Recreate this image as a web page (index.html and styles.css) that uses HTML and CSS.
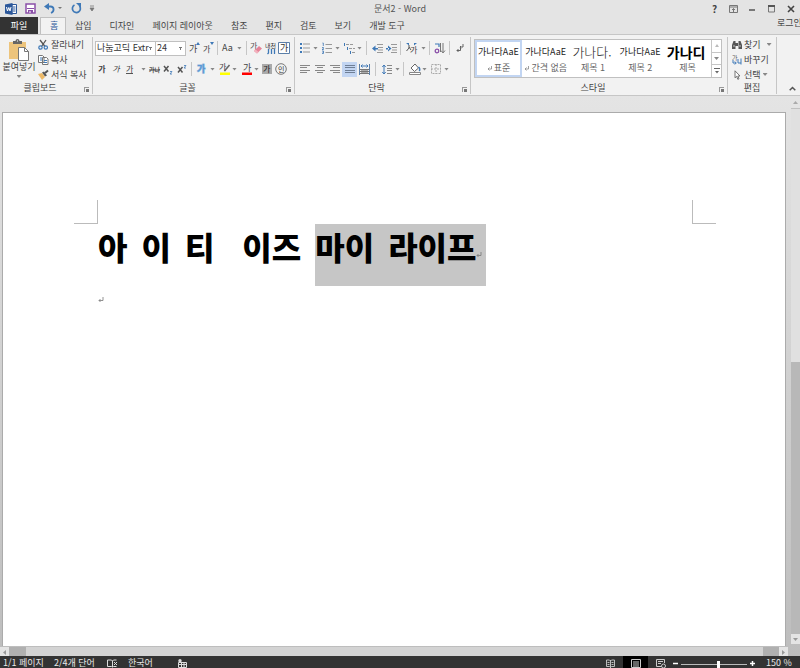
FILE: index.html
```html
<!DOCTYPE html>
<html lang="ko">

<head>
  <meta charset="UTF-8" />
  <meta name="viewport" content="width=device-width, initial-scale=1.0" />
  <title>문서2 - Word</title>
  <link rel="stylesheet" href="styles.css">
</head>

<body>
  <header class="titlebar">
    <div class="quick">
      <svg width="12" height="12" viewBox="0 0 12 12"><path d="M7 1.500h4.500v9H7z" fill="#fff" stroke="#2b579a"/><path d="M8 4h2.500M8 6h2.500M8 8h2.500" stroke="#2b579a"/><path d="M0 1.500 7.500 0v12L0 10.500z" fill="#2b579a"/><path d="m1.500 4 1 4L3.800 4.500 5 8l1-4" fill="none" stroke="#fff"/></svg>
      <button class="qb" aria-label="저장"><svg width="11" height="11" viewBox="0 0 11 11"><path d="M1 1h9v9H1z" fill="#fff" stroke="#8a4fa8" stroke-width="1.500"/><path d="M2 5.500h7" stroke="#8a4fa8"/><path d="M3 7h5v3H3z" fill="#8a4fa8"/><path d="M4.500 8h1v2h-1z" fill="#fff"/></svg></button>
      <button class="qb" aria-label="실행 취소"><svg width="19" height="11" viewBox="0 0 19 11"><path d="M5 0v7L0 3.500z" fill="#3f79b7"/><path d="M3 3.500h3.500c4 0 4 5 .5 6.500" fill="none" stroke="#3f79b7" stroke-width="1.800"/><path d="M14 4h4l-2 2z" fill="#777"/></svg></button>
      <button class="qb" aria-label="다시 실행"><svg width="11" height="11" viewBox="0 0 11 11"><path d="M3.500 2A4 4 0 1 0 8.500 3" fill="none" stroke="#3f79b7" stroke-width="1.700"/><path d="M5 0h5v5z" fill="#3f79b7"/></svg></button>
      <button class="qb" aria-label="사용자 지정"><svg width="5" height="7" viewBox="0 0 5 7"><path d="M0 1h4M0 3h4l-2 3z" stroke="#777" fill="#777" stroke-width=".8"/></svg></button>
    </div>
    <h1 class="doc-title">문서2 - Word</h1>
    <div class="window-buttons">
      <button class="wb" aria-label="도움말"><b>?</b></button>
      <button class="wb" aria-label="리본 표시"><svg width="9" height="8" viewBox="0 0 9 8"><path d="M.5.500h8v7h-8zM.5 2h8M4.500 7V3.500M3 5l1.500-1.500L6 5" fill="none" stroke="#777"/></svg></button>
      <button class="wb" aria-label="최소화"><svg width="7" height="8" viewBox="0 0 7 8"><path d="M0 5h6" stroke="#555" stroke-width="1.500"/></svg></button>
      <button class="wb" aria-label="최대화"><svg width="8" height="8" viewBox="0 0 8 8"><path d="M.5 1v6h6V1" fill="none" stroke="#777"/><path d="M0 1h7" stroke="#555" stroke-width="2"/></svg></button>
      <button class="wb" aria-label="닫기"><svg width="8" height="8" viewBox="0 0 8 8"><path d="m1 1 6 6M7 1 1 7" stroke="#444" stroke-width="1.600"/></svg></button>
    </div>
  </header>

  <nav class="tabs">
    <button class="tab file">파일</button>
    <button class="tab active">홈</button>
    <button class="tab">삽입</button>
    <button class="tab">디자인</button>
    <button class="tab">페이지 레이아웃</button>
    <button class="tab">참조</button>
    <button class="tab">편지</button>
    <button class="tab">검토</button>
    <button class="tab">보기</button>
    <button class="tab">개발 도구</button>
    <a class="login" href="#">로그인</a>
  </nav>

  <section class="ribbon">
    <div class="group clipboard">
      <div class="group-body">
        <button class="paste">
          <svg width="20" height="22" viewBox="0 0 20 22"><path d="M0 3h17v17H0z" fill="#edc47c"/><path d="M4 5V2h2.500a2 2 0 0 1 4 0H13v3z" fill="#666"/><path d="M8 1.500h1v1H8z" fill="#fff"/><path d="M9.500 8.500h6l4 4v9h-10z" fill="#fff" stroke="#777"/><path d="M15.500 8.500v4h4" fill="none" stroke="#777"/></svg>
          <span>붙여넣기</span>
          <i class="arr"></i>
        </button>
        <div class="stack">
          <button class="line-btn"><svg width="11" height="10" viewBox="0 0 11 10"><path d="m2 0 5 6.500M8 0 3.500 6.500" stroke="#555" stroke-width="1.300"/><circle cx="2.500" cy="7.500" r="1.700" fill="none" stroke="#3f79b7" stroke-width="1.200"/><circle cx="7.800" cy="7.500" r="1.700" fill="none" stroke="#3f79b7" stroke-width="1.200"/></svg>잘라내기</button>
          <button class="line-btn"><svg width="11" height="10" viewBox="0 0 11 10"><path d="M.5.500h4l1.500 1.500v5.500H.5zM4.500 2.500h4L10 4v5.500H4.500z" fill="#fff" stroke="#777"/><path d="M2 3h2M2 5h2M6 5.500h3M6 7.500h3" stroke="#3f79b7"/></svg>복사</button>
          <button class="line-btn"><svg width="11" height="10" viewBox="0 0 11 10"><path d="m0 4 4-1 3 4-3 3z" fill="#edb967"/><path d="m4 2.500 2-1 3 4-2 1z" fill="#555"/><path d="m7 3 3-2.500" stroke="#555" stroke-width="2"/></svg>서식 복사</button>
        </div>
      </div>
      <div class="group-label">클립보드<i class="launcher"></i></div>
    </div>

    <div class="group font">
      <div class="group-body rows">
        <div class="row">
          <select class="combo combo-font" aria-label="글꼴"><option>나눔고딕 Extr</option></select>
          <select class="combo combo-size" aria-label="글꼴 크기"><option>24</option></select>
          <button class="ib" aria-label="글꼴 크게"><svg width="12" height="12" viewBox="0 0 12 12"><text x="1" y="10" font-size="9" fill="#444">가</text><path d="M8 3h4L10 0z" fill="#3f79b7"/></svg></button>
          <button class="ib" aria-label="글꼴 작게"><svg width="12" height="12" viewBox="0 0 12 12"><text x="1" y="10" font-size="8" fill="#444">가</text><path d="M8 0h4l-2 3z" fill="#3f79b7"/></svg></button>
          <i class="sep"></i>
          <button class="ib aa">Aa<i class="arr"></i></button>
          <i class="sep"></i>
          <button class="ib" aria-label="서식 지우기"><svg width="13" height="13" viewBox="0 0 13 13"><text x="0" y="7" font-size="8" fill="#555">가</text><path d="m4 9 5-5 3 2.500-5 5z" fill="#e58397"/><path d="m4 9 1.500-1.500 3 2.500L7 11.500z" fill="#f3b3bf"/></svg></button>
          <button class="ib" aria-label="윗주 달기"><svg width="13" height="13" viewBox="0 0 13 13"><text x="1" y="6" font-size="6" fill="#333">내천</text><path d="M4.500 7v4l-1 1M7.500 7v5M10.500 7v5" fill="none" stroke="#3f79b7" stroke-width="1.300"/></svg></button>
          <button class="ib" aria-label="문자 테두리"><svg width="12" height="12" viewBox="0 0 12 12"><path d="M.5.500h11v11H.5z" fill="#fff" stroke="#5b7fa8"/><text x="2" y="9" font-size="9" fill="#333">가</text></svg></button>
        </div>
        <div class="row">
          <button class="ib tiny bold" aria-label="굵게">가</button>
          <button class="ib tiny italic" aria-label="기울임꼴">가</button>
          <button class="ib split first" aria-label="밑줄"><span class="tiny underline">가</span><i class="arr"></i></button>
          <button class="ib" aria-label="취소선"><svg width="11" height="9" viewBox="0 0 11 9"><text x="0" y="7" font-size="6" font-weight="700" fill="#555">가나</text><path d="M0 5h11" stroke="#444"/></svg></button>
          <button class="ib" aria-label="아래 첨자"><svg width="10" height="9" viewBox="0 0 10 9"><path d="m1 1 4.500 5.500M5.500 1 1 6.500" stroke="#555" stroke-width="1.500"/><path d="M7 6.500h2L7 9h2" fill="none" stroke="#3f79b7" stroke-width=".8"/></svg></button>
          <button class="ib" aria-label="위 첨자"><svg width="10" height="9" viewBox="0 0 10 9"><path d="m1 2 4.500 5.500M5.500 2 1 7.500" stroke="#555" stroke-width="1.500"/><path d="M7 .5h2L7 3h2" fill="none" stroke="#3f79b7" stroke-width=".8"/></svg></button>
          <i class="sep"></i>
          <button class="ib split" aria-label="텍스트 효과"><svg width="10" height="10" viewBox="0 0 10 10"><text x="0" y="8" font-size="9" font-weight="700" fill="#5b97d2" stroke="#8fb8e0" stroke-width="1" paint-order="stroke">가</text></svg><i class="arr"></i></button>
          <button class="ib split" aria-label="형광펜"><svg width="12" height="12" viewBox="0 0 12 12"><text x="0" y="7" font-size="8" fill="#444">가</text><path d="m10.500 2-5 6" stroke="#666" stroke-width="1.500"/><path d="M1 9.500h10V12H1z" fill="#ff0"/></svg><i class="arr"></i></button>
          <button class="ib split" aria-label="글꼴 색"><svg width="12" height="12" viewBox="0 0 12 12"><text x="2" y="8" font-size="9" fill="#444">가</text><path d="M1 9.500h10V12H1z" fill="#f00"/></svg><i class="arr"></i></button>
          <button class="ib" aria-label="문자 음영"><svg width="10" height="10" viewBox="0 0 10 10"><path d="M0 0h10v10H0z" fill="#aaa"/><text x="1" y="8" font-size="8" fill="#222">가</text></svg></button>
          <button class="ib" aria-label="원 문자"><svg width="12" height="12" viewBox="0 0 12 12"><circle cx="6" cy="6" r="5.300" fill="none" stroke="#777"/><text x="3" y="9" font-size="7" fill="#333">인</text></svg></button>
        </div>
      </div>
      <div class="group-label">글꼴<i class="launcher"></i></div>
    </div>

    <div class="group para">
      <div class="group-body rows">
        <div class="row">
          <button class="ib split" aria-label="글머리 기호"><svg width="10" height="10" viewBox="0 0 10 10"><path d="M0 1h2M0 5h2M0 9h2" stroke="#3f79b7" stroke-width="2"/><path d="M3 1h7M3 5h7M3 9h7" stroke="#999"/></svg><i class="arr"></i></button>
          <button class="ib split" aria-label="번호 매기기"><svg width="10" height="11" viewBox="0 0 10 11"><path d="M.5 0h.8v3M0 4.500h1.500v1L0 6.500h1.800M0 8h1.500v2.500H0M.5 9.300h1" fill="none" stroke="#3f79b7" stroke-width=".8"/><path d="M3.500 1.500h6.500M3.500 5.500h6.500M3.500 9.500h6.500" stroke="#999"/></svg><i class="arr"></i></button>
          <button class="ib split" aria-label="다단계 목록"><svg width="11" height="11" viewBox="0 0 11 11"><path d="M.5 0v3M3.500 4v3M6.500 8v3" stroke="#3f79b7"/><path d="M2 1.500h8M5 5.500h6M8 9.500h3" stroke="#999" stroke-dasharray="3 1"/></svg><i class="arr"></i></button>
          <i class="sep wide"></i>
          <button class="ib" aria-label="내어쓰기"><svg width="11" height="9" viewBox="0 0 11 9"><path d="M5 .5h6M6 3.500h5M6 6h5M5 8.500h6" stroke="#999"/><path d="M0 4.500 3.500 1.500v6zM3 4h3v1.500H3z" fill="#3f79b7"/></svg></button>
          <button class="ib" aria-label="들여쓰기"><svg width="11" height="9" viewBox="0 0 11 9"><path d="M5 .5h6M6 3.500h5M6 6h5M5 8.500h6" stroke="#999"/><path d="M5.500 4.500 2 1.500v6zM0 4h3v1.500H0z" fill="#3f79b7"/></svg></button>
          <i class="sep"></i>
          <button class="ib split wide" aria-label="한글 입력 체계 레이아웃"><svg width="12" height="11" viewBox="0 0 12 11"><path d="M0 0l3 2.500V0zM11 0 8 2.500V0z" fill="#3f79b7"/><path d="M3 2v3L.5 8M3 4l2 3" fill="none" stroke="#555"/><text x="4" y="10" font-size="8" fill="#444">가</text></svg><i class="arr"></i></button>
          <i class="sep"></i>
          <button class="ib" aria-label="정렬"><svg width="11" height="11" viewBox="0 0 11 11"><path d="M1 1h4v3" fill="none" stroke="#3f79b7" stroke-width="1.200"/><circle cx="3" cy="8" r="1.800" fill="none" stroke="#8a4fa8" stroke-width="1.300"/><path d="M6.500 0v9M9 0v9M7 7.500 9 10l2-2.500" fill="none" stroke="#777"/></svg></button>
          <i class="sep wide"></i>
          <button class="ib" aria-label="편집 기호 표시"><svg width="8" height="9" viewBox="0 0 8 9"><path d="M7 0v3H4M5 2 4 3l1 1.500M4.500 4v2.500H1M2.500 5 1 6.500 2.500 8" fill="none" stroke="#555" stroke-width=".9"/></svg></button>
        </div>
        <div class="row">
          <button class="ib" aria-label="왼쪽 맞춤"><svg width="10" height="8" viewBox="0 0 10 8"><path d="M0 .5h10M0 2.500h7M0 5.500h10M0 7.500h7" stroke="#888"/></svg></button>
          <button class="ib" aria-label="가운데 맞춤"><svg width="10" height="8" viewBox="0 0 10 8"><path d="M0 .5h10M2 2.500h6M0 5.500h10M2 7.500h6" stroke="#888"/></svg></button>
          <button class="ib" aria-label="오른쪽 맞춤"><svg width="10" height="8" viewBox="0 0 10 8"><path d="M0 .5h10M3 2.500h7M0 5.500h10M3 7.500h7" stroke="#888"/></svg></button>
          <button class="ib on" aria-label="양쪽 맞춤"><svg width="10" height="8" viewBox="0 0 10 8"><path d="M0 .5h10M0 2.500h10M0 5.500h10M0 7.500h10" stroke="#6f7f96"/></svg></button>
          <button class="ib" aria-label="균등 분할"><svg width="11" height="11" viewBox="0 0 11 11"><path d="M.5 0v11M10.500 0v11" stroke="#5b7fa8"/><path d="M2 2h7M3.500.5 2 2l1.500 1.500M7.500.5 9 2 7.500 3.500" fill="none" stroke="#3f79b7"/><path d="M2 5h7v5H2z" fill="#aaa"/><path d="M1 5.500h9M1 7.500h9M1 9.500h9" stroke="#777"/></svg></button>
          <i class="sep wide"></i>
          <button class="ib split" aria-label="줄 간격"><svg width="10" height="11" viewBox="0 0 10 11"><path d="M2 1v9M.3 3 2 1l1.700 2M.3 8 2 10l1.700-2" fill="none" stroke="#3f79b7"/><path d="M5 1.500h5M5 4.500h5M5 6.500h5M5 9.500h5" stroke="#888"/></svg><i class="arr"></i></button>
          <i class="sep"></i>
          <button class="ib split" aria-label="음영"><svg width="12" height="12" viewBox="0 0 12 12"><path d="m2 5 4-4 3.500 4-4 3.500z" fill="#fff" stroke="#666"/><path d="M9.500 4c1.500 1 1.500 3 .7 4" fill="none" stroke="#3f79b7" stroke-width="1.500"/><path d="M.5 9.500h11v2H.5z" fill="#fff" stroke="#888"/></svg><i class="arr"></i></button>
          <button class="ib split" aria-label="테두리"><svg width="10" height="10" viewBox="0 0 10 10"><path d="M.5.500h9v9h-9zM5 0v10M0 5h10" fill="none" stroke="#aaa" stroke-dasharray="2 1"/></svg><i class="arr"></i></button>
        </div>
      </div>
      <div class="group-label">단락<i class="launcher"></i></div>
    </div>

    <div class="group styles">
      <div class="group-body">
        <div class="gallery">
          <button class="style selected"><span class="sample">가나다AaE</span><span class="name"><svg width="5" height="5" viewBox="0 0 5 5"><path d="M4.500 0v3H1M2.500 1.500 1 3l1.500 1.500" fill="none" stroke="#888" stroke-width=".8"/></svg> 표준</span></button>
          <button class="style"><span class="sample">가나다AaE</span><span class="name"><svg width="5" height="5" viewBox="0 0 5 5"><path d="M4.500 0v3H1M2.500 1.500 1 3l1.500 1.500" fill="none" stroke="#888" stroke-width=".8"/></svg> 간격 없음</span></button>
          <button class="style"><span class="sample big">가나다.</span><span class="name">제목 1</span></button>
          <button class="style"><span class="sample">가나다AaE</span><span class="name">제목 2</span></button>
          <button class="style"><span class="sample title">가나디</span><span class="name">제목</span></button>
          <div class="gallery-scroll">
            <button aria-label="위로"><svg width="4" height="3"><path d="M0 3h4L2 0z" fill="#bbb"/></svg></button>
            <button aria-label="아래로"><i class="arr"></i></button>
            <button aria-label="자세히"><svg width="6" height="6" viewBox="0 0 6 6"><path d="M0 .5h6" stroke="#666"/><path d="M1 3h4L3 5.500z" fill="#666"/></svg></button>
          </div>
        </div>
      </div>
      <div class="group-label">스타일<i class="launcher"></i></div>
    </div>

    <div class="group edit">
      <div class="group-body">
        <div class="stack">
          <button class="line-btn"><svg width="10" height="9" viewBox="0 0 10 9"><path d="M0 9V5l1.500-4h2V9zM10 9V5L8.500 1h-2v8zM3 3h4v3H3z" fill="#555"/><path d="M1 6h2M7 6h2" stroke="#ddd" stroke-width=".8"/></svg>찾기<i class="arr far"></i></button>
          <button class="line-btn"><svg width="10" height="11" viewBox="0 0 10 11"><text x="0" y="6" font-size="6" fill="#555">가</text><path d="M1 6v3h3M2.800 7.500 4.300 9 2.800 10.500M6 5v4h3M9 4.500v6" fill="none" stroke="#3f79b7"/></svg>바꾸기</button>
          <button class="line-btn"><svg width="10" height="10" viewBox="0 0 10 10"><path d="M3 .8v7l1.600-1.500 1.200 3 1.200-.5-1.200-2.800H8z" fill="#fff" stroke="#666" stroke-width=".9"/></svg>선택<i class="arr"></i></button>
        </div>
      </div>
      <div class="group-label">편집</div>
    </div>
    <button class="collapse" aria-label="리본 메뉴 축소"><svg width="7" height="5" viewBox="0 0 7 5"><path d="M.7 4.300 3.500 1.500l2.800 2.800" fill="none" stroke="#555" stroke-width="1.500"/></svg></button>
  </section>

  <main class="workspace">
    <div class="view">
      <article class="page">
        <div class="corners"><i class="corner"></i><i class="corner right"></i></div>
        <div class="text" contenteditable="true" spellcheck="false">
          <p class="heading"><span>아</span><span>이</span><span class="far-word">티</span><span>이즈</span><mark><span>마이</span><span>라이프</span><svg width="6" height="6" viewBox="0 0 6 6"><path d="M5 0v3.500H1M2.500 2 1 3.500 2.500 5" fill="none" stroke="#777" stroke-width=".8"/></svg></mark></p>
          <p class="empty"><svg width="6" height="6" viewBox="0 0 6 6"><path d="M5 0v3.500H1M2.500 2 1 3.500 2.500 5" fill="none" stroke="#777" stroke-width=".8"/></svg></p>
        </div>
      </article>
      <div class="vscroll">
        <button class="sb" aria-label="위로 스크롤"><svg width="5" height="3"><path d="M0 3h5L2.500 0z" fill="#aaa"/></svg></button>
        <div class="vthumb"></div>
        <div class="vtrack"></div>
        <button class="sb" aria-label="아래로 스크롤"><svg width="5" height="3"><path d="M0 0h5L2.500 3z" fill="#999"/></svg></button>
      </div>
    </div>
    <div class="hscroll">
      <button class="sb" aria-label="왼쪽으로 스크롤"><svg width="3" height="5"><path d="M3 0v5L0 2.500z" fill="#999"/></svg></button>
      <div class="hthumb"></div>
      <button class="sb" aria-label="오른쪽으로 스크롤"><svg width="3" height="5"><path d="M0 0v5l3-2.500z" fill="#999"/></svg></button>
    </div>
  </main>

  <footer class="status">
    <span class="st-page">1/1 페이지</span>
    <span class="st-words">2/4개 단어</span>
    <svg class="st-icon" width="11" height="9" viewBox="0 0 11 9"><path d="M.5 1h4l1 1v6l-1-.5h-4zM5.500 2l1-1h3M5.500 8l1-.5h3M7 3l3 3M10 3 7 6" fill="none" stroke="#ddd"/></svg>
    <span class="st-lang">한국어</span>
    <svg class="st-icon" width="9" height="9" viewBox="0 0 9 9"><path d="M.5 3.500h8v5h-8zM0 5.500h9M3.500 3v6M6 3v6" fill="none" stroke="#ddd"/><circle cx="2" cy="1.700" r="1.700" fill="#ddd"/></svg>
    <div class="views">
      <button class="view-btn" aria-label="읽기 모드"><svg width="9" height="9" viewBox="0 0 9 9"><path d="M.5 1h3l1 1 1-1h3v6.500h-3l-1 1-1-1h-3zM4.500 1v8M1.500 3.500h2M1.500 5.500h2M5.500 3.500h2M5.500 5.500h2" fill="none" stroke="#ccc" stroke-width=".9"/></svg></button>
      <button class="view-btn current" aria-label="인쇄 모양"><svg width="10" height="9" viewBox="0 0 10 9"><path d="M.5.500h9v8h-9zM2 3h6M2 5h6M2 7h6" fill="none" stroke="#ccc"/></svg></button>
      <button class="view-btn" aria-label="웹 모양"><svg width="10" height="10" viewBox="0 0 10 10"><path d="M8.500 4V.5h-8v7H5M2 2.500h5M2 4.500h3" fill="none" stroke="#ccc"/><circle cx="7.500" cy="7" r="2" fill="none" stroke="#ccc"/></svg></button>
    </div>
    <button class="zoom-btn" aria-label="축소"><svg width="5" height="5"><path d="M0 2.500h5" stroke="#fff" stroke-width="1.500"/></svg></button>
    <input class="zoom" type="range" min="0" max="100" value="57" aria-label="확대/축소">
    <button class="zoom-btn" aria-label="확대"><svg width="5" height="5"><path d="M0 2.500h5M2.500 0v5" stroke="#fff" stroke-width="1.500"/></svg></button>
    <span class="st-zoom">150 %</span>
  </footer>
</body>

</html>
```
FILE: styles.css
```css
* {
  margin: 0;
  padding: 0;
  box-sizing: border-box;
}

body {
  display: flex;
  flex-direction: column;
  height: 100vh;
  overflow: hidden;
  background: #e4e4e4;
  color: #444;
  font: 9px/12px "Noto Sans CJK KR", "Noto Sans", sans-serif;
}

button,
select {
  border: 0;
  background: none;
  color: inherit;
  font: inherit;
  white-space: nowrap;
}

svg {
  display: block;
  flex: none;
  overflow: visible;
}

.arr {
  flex: none;
  width: 5px;
  height: 3px;
  background: #888;
  clip-path: polygon(0 0, 100% 0, 50% 100%);
}

/* title bar */
.titlebar {
  display: grid;
  grid-template-columns: 1fr auto 1fr;
  align-items: center;
  height: 17px;
}

.quick {
  display: flex;
  align-items: center;
  gap: 8px;
  padding-left: 5px;
}

.doc-title {
  font-size: 9px;
  font-weight: 400;
  color: #555;
}

.window-buttons {
  display: flex;
  justify-content: flex-end;
}

.wb {
  display: flex;
  align-items: center;
  justify-content: center;
  width: 19px;
  height: 16px;
  font-size: 10px;
}

/* tabs */
.tabs {
  display: flex;
  height: 17px;
}

.tab {
  flex: none;
  padding: 0 9px;
}

.tab.file {
  width: 38px;
  margin-right: 2px;
  background: #333;
  color: #fff;
}

.tab.active {
  width: 26px;
  background: #f2f2f2;
  border: 1px solid #c0c0c0;
  border-bottom: 0;
  color: #2b579a;
}

.login {
  width: 23px;
  margin-left: auto;
  color: #444;
  text-decoration: none;
  white-space: nowrap;
}

/* ribbon */
.ribbon {
  display: flex;
  height: 62px;
  padding-top: 2px;
  background: #f2f2f2;
  border-top: 1px solid #c6c6c6;
  border-bottom: 1px solid #c6c6c6;
}

.group {
  display: flex;
  flex-direction: column;
  height: 57px;
  border-right: 1px solid #c6c6c6;
}

.group-body {
  display: flex;
  height: 46px;
}

.group-label {
  position: relative;
  line-height: 12px;
  text-align: center;
}

.launcher {
  position: absolute;
  right: 3px;
  bottom: 2px;
  width: 5px;
  height: 5px;
  border-top: 1px solid #999;
  border-left: 1px solid #999;
  background: linear-gradient(#777, #777) right bottom / 3px 3px no-repeat;
}

.clipboard {
  width: 93px;
}

.clipboard .group-label,
.font .group-label,
.para .group-label,
.styles .group-label {
  padding-right: 12px;
}

.font {
  width: 202px;
}

.para {
  width: 176px;
}

.styles {
  flex: 1;
  min-width: 200px;
}

.edit {
  width: 49px;
}

.paste {
  display: flex;
  flex-direction: column;
  align-items: center;
  width: 38px;
  padding-top: 2px;
}

.paste span {
  line-height: 12px;
}

.paste .arr {
  margin-top: 2px;
}

.stack {
  display: flex;
  flex-direction: column;
  height: 45px;
}

.line-btn {
  display: flex;
  align-items: center;
  gap: 2px;
  height: 15px;
}

.line-btn .far {
  margin-left: 4px;
}

.edit .group-body {
  padding-left: 4px;
}

.rows {
  flex-direction: column;
  gap: 7px;
  padding: 4px 0 0 2px;
}

.row {
  display: flex;
  align-items: center;
  height: 14px;
}

.combo {
  height: 15px;
  padding-left: 1px;
  appearance: none;
  border: 1px solid #c0c0c0;
  background:
    linear-gradient(#777, #777) right 4px top 6px / 1px 2px no-repeat,
    linear-gradient(#777, #777) right 3px top 5px / 3px 1px no-repeat,
    #fff;
  color: #333;
  line-height: 12px;
}

.combo-font {
  width: 61px;
}

.combo-size {
  width: 31px;
  margin-left: -1px;
  margin-right: 1px;
}

.ib {
  display: flex;
  align-items: center;
  justify-content: center;
  flex: none;
  width: 14px;
  height: 14px;
}

.ib.split {
  justify-content: space-between;
  width: 22px;
  padding: 0 1px 0 3px;
}

.ib.first,
.ib.split.wide {
  width: 24px;
}

.ib.aa {
  gap: 4px;
  width: 24px;
}

.para .row:last-child .ib:not(.split) {
  width: 15px;
  height: 15px;
}

.ib.on {
  background: #c2d5f2;
}

.tiny {
  font-size: 8px;
}

.bold {
  font-weight: 700;
}

.italic {
  font-style: italic;
}

.underline {
  border-bottom: 1px solid #555;
  line-height: 9px;
}

.sep {
  flex: none;
  width: 5px;
  height: 14px;
  background: linear-gradient(#c6c6c6, #c6c6c6) center / 1px 100% no-repeat;
}

.sep.wide {
  width: 7px;
}

/* style gallery */
.styles .group-body {
  padding: 2px 5px 4px 3px;
}

.gallery {
  display: flex;
  flex: 1;
  min-width: 0;
  border: 1px solid #c0c0c0;
  background: #fff;
}

.style {
  display: flex;
  flex: 1 1 0;
  flex-direction: column;
  min-width: 0;
  padding: 3px 1px 0;
  border: 2px solid transparent;
}

.style.selected {
  border-color: #c2d5f2;
}

.sample {
  width: 100%;
  height: 17px;
  line-height: 14px;
  text-align: left;
  color: #222;
}

.sample.big {
  font-size: 13px;
  font-weight: 300;
}

.sample.title {
  font-size: 14px;
  font-weight: 700;
  color: #000;
}

.name {
  display: flex;
  align-items: center;
  justify-content: center;
  gap: 2px;
  width: 100%;
  line-height: 12px;
  color: #666;
}

.gallery-scroll {
  display: flex;
  flex: none;
  flex-direction: column;
  width: 10px;
  border-left: 1px solid #c6c6c6;
}

.gallery-scroll button {
  display: flex;
  flex: 1;
  align-items: center;
  justify-content: center;
}

.gallery-scroll button + button {
  border-top: 1px solid #c6c6c6;
}

.collapse {
  align-self: flex-end;
  width: 23px;
  padding: 0 0 4px 12px;
}

/* document */
.workspace {
  display: flex;
  flex: 1;
  flex-direction: column;
  min-height: 0;
  background: linear-gradient(#e4e4e4, #bdbdbd);
}

.view {
  display: flex;
  flex: 1;
  min-height: 0;
}

.page {
  flex: 1;
  margin: 16px 5px 0 2px;
  padding: 87px 69px 0 71px;
  border: 1px solid #ababab;
  border-bottom: 0;
  background: #fff;
}

.corners {
  display: flex;
  justify-content: space-between;
}

.corner {
  width: 24px;
  height: 24px;
  border: solid #bbb;
  border-width: 0 1px 1px 0;
}

.corner.right {
  border-width: 0 0 1px 1px;
}

.text {
  padding: 0 24px;
  outline: 0;
}

.heading {
  display: flex;
  gap: 14px;
  color: #000;
  font-size: 32px;
  font-weight: 900;
  line-height: 44px;
  white-space: nowrap;
}

.far-word {
  margin-right: 14px;
}

.heading mark {
  display: flex;
  height: 62px;
  padding-right: 4px;
  background: #c6c6c6;
  color: #000;
}

.heading mark span + span {
  margin-left: 14px;
}

.heading mark svg {
  margin-top: 28px;
}

.empty {
  padding-top: 11px;
}

.vscroll {
  display: flex;
  flex-direction: column;
  width: 9px;
  padding: 1px 0 2px;
}

.sb {
  display: flex;
  flex: none;
  align-items: center;
  justify-content: center;
  width: 9px;
  height: 10px;
  background: #e4e4e4;
}

.vthumb {
  flex: 253;
  margin-top: 1px;
  border-top: 1px solid #c0c0c0;
  background: #e0e0e0;
}

.vtrack {
  flex: 273;
  background: #b8b8b8;
}

.hscroll {
  display: flex;
  height: 10px;
  padding: 1px 12px 0 0;
}

.hthumb {
  flex: 1;
  border: solid #b0b0b0;
  border-width: 0 16px 0 17px;
  background: #d3d3d3;
}

/* status bar */
.status {
  display: flex;
  align-items: flex-start;
  height: 12px;
  background: #333;
  color: #e8e8e8;
  white-space: nowrap;
}

.status > span {
  padding-top: 1px;
}

.st-page {
  width: 51px;
  margin-left: 3px;
}

.st-words {
  width: 53px;
}

.st-icon {
  margin-top: 3px;
}

.st-lang {
  width: 50px;
  margin-left: 10px;
}

.views {
  display: flex;
  margin-left: auto;
}

.view-btn {
  display: flex;
  justify-content: center;
  width: 25px;
  height: 12px;
  padding-top: 3px;
}

.view-btn.current {
  background: #000;
}

.zoom-btn {
  width: 5px;
  padding-top: 5px;
}

.zoom {
  width: 66px;
  height: 12px;
  margin: 2px 3px 0;
  appearance: none;
  background: linear-gradient(#bbb, #bbb) center / 100% 1px no-repeat;
}

.zoom::-webkit-slider-thumb {
  appearance: none;
  width: 3px;
  height: 7px;
  background: #fff;
}

.st-zoom {
  width: 34px;
  margin-left: 11px;
}
```
